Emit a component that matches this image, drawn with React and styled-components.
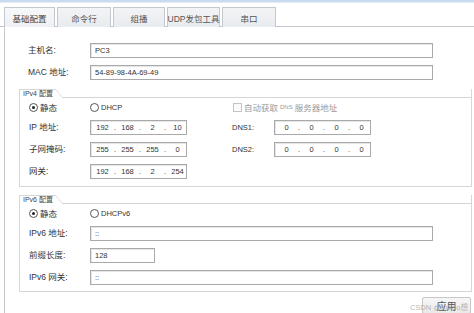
import React from "react";
import styled, { createGlobalStyle } from "styled-components";

const Global = createGlobalStyle`
  html, body { margin: 0; padding: 0; background: #fff; }
  body { font-family: "Liberation Sans", "Noto Sans CJK SC", sans-serif; font-size: 9px; color: #333; }
  * { box-sizing: border-box; }
`;

const Page = styled.div`
  width: 474px;
  height: 313px;
  overflow: hidden;
  position: relative;
  background: #fff;
`;

const TopStrip = styled.div`
  height: 3px;
  background: #c9dbee;
  border-bottom: 1px solid #e4ecf5;
`;

const TabBar = styled.div`
  display: flex;
  gap: 2px;
  margin-top: 4px;
  padding-left: 4px;
  height: 20px;
  border-bottom: 1px solid #c4c8ce;
`;

const Tab = styled.div`
  width: ${(p) => p.$w}px;
  height: 20px;
  border: 1px solid #c4c8ce;
  border-bottom: none;
  background: ${(p) => (p.$active ? "linear-gradient(#f7f8fa, #eef0f3)" : "linear-gradient(#f3f4f6, #e8ebef)")};
  color: ${(p) => (p.$active ? "#444" : "#555")};
  display: flex;
  align-items: center;
  justify-content: center;
  font-size: 8.5px;
  white-space: nowrap;
  font-family: "Liberation Sans", "Noto Sans CJK SC", sans-serif;
`;

const Panel = styled.div`
  margin-left: 4px;
  border-left: 1px solid #c4c8ce;
  padding: 16px 2px 0 14px;
  height: 290px;
`;

const HostGrid = styled.div`
  display: grid;
  grid-template-columns: 62px 343px;
  row-gap: 7px;
  align-items: center;
  padding-left: 9px;
`;

const Label = styled.div`
  font-family: "Liberation Sans", "Noto Sans CJK SC", sans-serif;
  font-size: 8.5px;
  color: #333;
  white-space: nowrap;
  line-height: 15px;
`;

const TextBox = styled.div`
  height: 15px;
  width: ${(p) => (p.$w ? `${p.$w}px` : "100%")};
  border: 1px solid #a9a9a9;
  box-shadow: inset 1px 1px 0 #e6e6e6;
  background: #fff;
  font-size: 7.5px;
  line-height: 13px;
  padding-left: 4px;
  color: #333;
  font-family: "Liberation Sans", sans-serif;
`;

const IpBox = styled.div`
  height: 15px;
  width: 97px;
  border: 1px solid #a9a9a9;
  box-shadow: inset 1px 1px 0 #e6e6e6;
  background: #fff;
  display: flex;
  align-items: center;
  padding-left: 3px;
  font-size: 7.5px;
  font-family: "Liberation Sans", sans-serif;
  color: #333;
`;

const Seg = styled.span`
  width: 17px;
  text-align: center;
`;

const Dot = styled.span`
  width: 8px;
  text-align: center;
`;

const Group = styled.div`
  margin-top: ${(p) => p.$mt}px;
  width: 453px;
`;

const GroupHead = styled.div`
  display: flex;
  height: ${(p) => p.$h}px;
`;

const Legend = styled.div`
  position: relative;
  border-left: 1px solid #d6d6d6;
  border-top: 1px solid #d6d6d6;
  padding: 0 4px 0 3px;
  width: 36px;
  font-size: 7px;
  line-height: 8px;
  color: #444;
  white-space: nowrap;
  font-family: "Liberation Sans", "Noto Sans CJK SC", sans-serif;
  &::after {
    content: "";
    position: absolute;
    right: -8px;
    top: -1px;
    width: 8px;
    height: calc(100% + 1px);
    background: linear-gradient(
      to bottom left,
      transparent calc(50% - 0.6px),
      #d6d6d6 50%,
      transparent calc(50% + 0.6px)
    );
  }
`;

const HeadRule = styled.div`
  flex: 1;
  margin-left: 8px;
  border-bottom: 1px solid #d6d6d6;
  border-right: 1px solid #d6d6d6;
  height: 100%;
`;

const GroupBody = styled.div`
  border: 1px solid #d6d6d6;
  border-top: none;
  padding: ${(p) => p.$pad};
  display: grid;
  grid-template-columns: 61px 142px 42px 97px;
  align-items: center;
  row-gap: ${(p) => p.$gap}px;
`;

const Row6 = styled.div`
  grid-column: 2 / 5;
`;

const RadioWrap = styled.div`
  display: flex;
  align-items: center;
  gap: 2px;
  height: 12px;
  font-size: 8.5px;
  font-family: "Noto Sans CJK SC", "Liberation Sans", sans-serif;
  color: #333;
`;

const RadioCircle = styled.span`
  width: 9px;
  height: 9px;
  border-radius: 50%;
  border: 1px solid #555;
  background: #fff;
  display: inline-flex;
  align-items: center;
  justify-content: center;
  &::after {
    content: "";
    width: 3px;
    height: 3px;
    border-radius: 50%;
    background: ${(p) => (p.$on ? "#222" : "transparent")};
  }
`;

const LatinText = styled.span`
  font-family: "Liberation Sans", sans-serif;
  font-size: 7.5px;
`;

const CheckWrap = styled.div`
  grid-column: 3 / 5;
  display: flex;
  align-items: center;
  gap: 2px;
  color: #9a9a9a;
  font-family: "Noto Sans CJK SC", sans-serif;
  font-size: 8.5px;
  white-space: nowrap;
  margin-left: 1px;
`;

const CheckBox = styled.span`
  width: 9px;
  height: 9px;
  border: 1px solid #c4c4c4;
  background: #fafafa;
`;

const SmallLatin = styled.span`
  font-family: "Liberation Sans", sans-serif;
  font-size: 6px;
`;

const DnsLabel = styled(Label)`
  font-size: 7.5px;
`;

const Footer = styled.div`
  display: flex;
  justify-content: flex-end;
  padding-right: 1px;
  margin-top: 5px;
  position: relative;
`;

const ApplyButton = styled.div`
  width: 49px;
  height: 17px;
  border: 1px solid #c6c6c6;
  border-radius: 2px;
  background: linear-gradient(#f7f7f7, #e9e9e9);
  display: flex;
  align-items: center;
  justify-content: center;
  font-family: "Noto Sans CJK SC", sans-serif;
  font-size: 10px;
  color: #555;
`;

const Watermark = styled.div`
  position: absolute;
  right: 4px;
  top: 4px;
  font-family: "Liberation Sans", "Noto Sans CJK SC", sans-serif;
  font-size: 7.5px;
  color: rgba(150, 150, 150, 0.7);
  white-space: nowrap;
  pointer-events: none;
`;

const Ip = ({ v }) => (
  <IpBox>
    {v.map((s, i) => (
      <React.Fragment key={i}>
        {i > 0 && <Dot>.</Dot>}
        <Seg>{s}</Seg>
      </React.Fragment>
    ))}
  </IpBox>
);

const tabs = [
  ["基础配置", 51, true],
  ["命令行", 54],
  ["组播", 52],
  ["UDP发包工具", 53],
  ["串口", 54],
];

export default function App() {
  return (
    <Page>
      <Global />
      <TopStrip />
      <TabBar>
        {tabs.map(([t, w, a]) => (
          <Tab key={t} $w={w} $active={a}>
            {t}
          </Tab>
        ))}
      </TabBar>
      <Panel>
        <HostGrid>
          <Label>主机名:</Label>
          <TextBox>PC3</TextBox>
          <Label>MAC 地址:</Label>
          <TextBox>54-89-98-4A-69-49</TextBox>
        </HostGrid>

        <Group $mt={9}>
          <GroupHead $h={9}>
            <Legend>IPv4 配置</Legend>
            <HeadRule />
          </GroupHead>
          <GroupBody $pad="3px 0 7px 9px" $gap={7}>
            <RadioWrap>
              <RadioCircle $on />
              静态
            </RadioWrap>
            <RadioWrap>
              <RadioCircle />
              <LatinText>DHCP</LatinText>
            </RadioWrap>
            <CheckWrap>
              <CheckBox />
              自动获取 <SmallLatin>DNS</SmallLatin> 服务器地址
            </CheckWrap>

            <Label>IP 地址:</Label>
            <Ip v={["192", "168", "2", "10"]} />
            <DnsLabel>DNS1:</DnsLabel>
            <Ip v={["0", "0", "0", "0"]} />

            <Label>子网掩码:</Label>
            <Ip v={["255", "255", "255", "0"]} />
            <DnsLabel>DNS2:</DnsLabel>
            <Ip v={["0", "0", "0", "0"]} />

            <Label>网关:</Label>
            <Ip v={["192", "168", "2", "254"]} />
          </GroupBody>
        </Group>

        <Group $mt={8}>
          <GroupHead $h={9}>
            <Legend>IPv6 配置</Legend>
            <HeadRule />
          </GroupHead>
          <GroupBody $pad="3px 0 6px 9px" $gap={7}>
            <RadioWrap>
              <RadioCircle $on />
              静态
            </RadioWrap>
            <Row6>
              <RadioWrap>
                <RadioCircle />
                <LatinText>DHCPv6</LatinText>
              </RadioWrap>
            </Row6>

            <Label>IPv6 地址:</Label>
            <Row6>
              <TextBox $w={343}>::</TextBox>
            </Row6>

            <Label>前缀长度:</Label>
            <Row6>
              <TextBox $w={65}>128</TextBox>
            </Row6>

            <Label>IPv6 网关:</Label>
            <Row6>
              <TextBox $w={343}>::</TextBox>
            </Row6>
          </GroupBody>
        </Group>

        <Footer>
          <ApplyButton>应用</ApplyButton>
          <Watermark>CSDN @mlkso想</Watermark>
        </Footer>
      </Panel>
    </Page>
  );
}
